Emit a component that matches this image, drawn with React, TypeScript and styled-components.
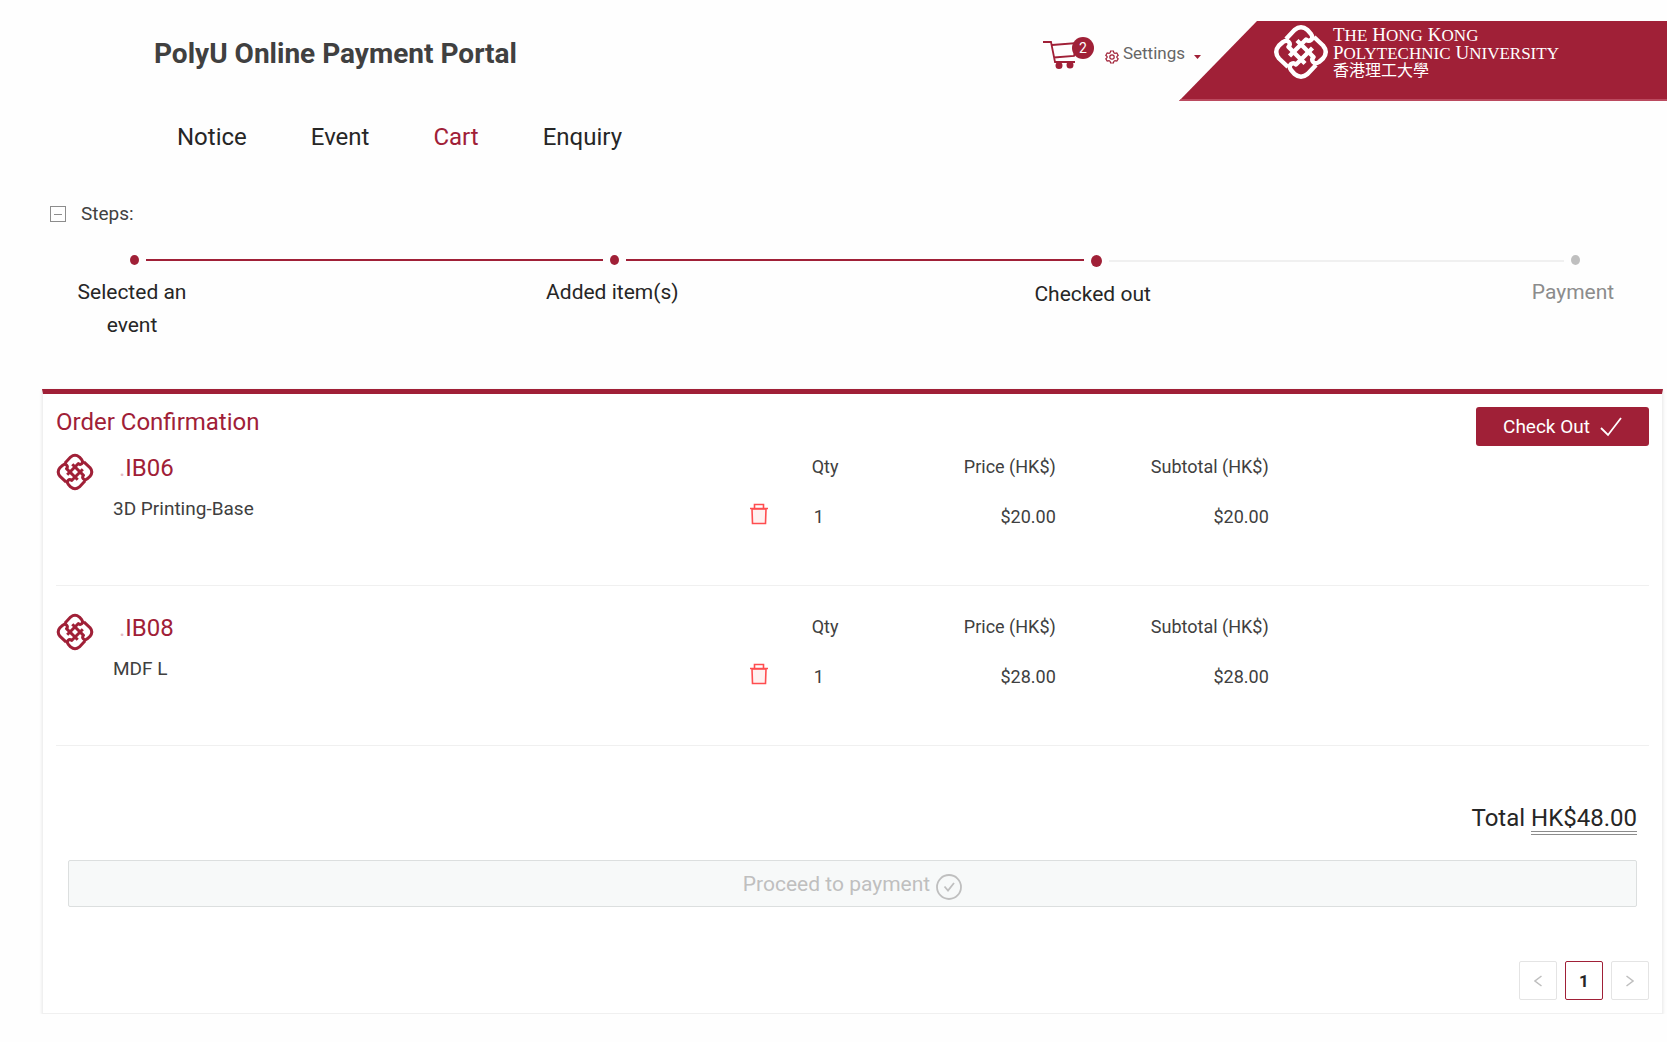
import React from "react";
import styled, { createGlobalStyle } from "styled-components";

const color = {
  brand: "#a02037",
  text: "#404040",
  strong: "#262626",
  muted: "#8c8c8c",
  disabled: "#bfbfbf",
  danger: "#ff4d4f",
  line: "#f0f0f0",
};

const GlobalStyle = createGlobalStyle`
  *, *::before, *::after { box-sizing: border-box; }
  body {
    margin: 0;
    background: #fefefe;
    color: ${color.text};
    font-family: Roboto, "Noto Sans CJK TC", sans-serif;
    font-size: 19px;
    line-height: 30px;
  }
  button { font: inherit; color: inherit; cursor: pointer; }
  h1, h2, h3, p, ol, ul { margin: 0; padding: 0; font-weight: 400; }
  ol, ul { list-style: none; }
  a { color: inherit; text-decoration: none; }
  svg { display: block; flex: none; }
`;

const Page = styled.div`
  padding-top: 21px;
`;

const Header = styled.header`
  display: flex;
  height: 80px;
  padding-left: 154px;
`;

const Title = styled.h1`
  flex: 1;
  padding-top: 17px;
  font-size: 28px;
  line-height: 32px;
  font-weight: 700;
  color: ${color.text};
`;

const Tools = styled.div`
  display: flex;
  align-items: flex-start;
  padding-top: 14px;
`;

const CartButton = styled.button`
  position: relative;
  width: 52px;
  height: 36px;
  margin-right: 10px;
  padding: 4px 0 0;
  border: 0;
  background: none;
  color: ${color.brand};
`;

const Badge = styled.span`
  position: absolute;
  top: 2px;
  right: 1px;
  width: 22px;
  height: 22px;
  border-radius: 11px;
  background: ${color.brand};
  color: #fff;
  font-size: 14px;
  line-height: 22px;
  text-align: center;
`;

const SettingsButton = styled.button`
  display: flex;
  align-items: center;
  gap: 4px;
  height: 36px;
  margin-right: -22px;
  padding: 0;
  border: 0;
  background: none;
  color: #666;
  font-size: 17px;

  svg { color: ${color.brand}; margin-top: 7px; }
  svg:last-child { margin-left: 5px; }
`;

const Banner = styled.a`
  display: flex;
  gap: 4px;
  width: 488px;
  height: 80px;
  padding: 3px 0 0 94px;
  border-bottom: 2px solid #bb4a5f;
  background: ${color.brand};
  color: #fff;
  clip-path: polygon(78px 0, 100% 0, 100% 100%, 0 100%);
`;

const BannerText = styled.span`
  display: flex;
  flex-direction: column;
  padding-top: 2px;
  font-family: "Liberation Serif", "Noto Sans CJK TC", serif;
  line-height: 18px;
  white-space: nowrap;
`;

const English = styled.span`
  display: flex;
  align-items: baseline;
  gap: 5px;
  height: 18px;
  font-size: 17px;
  text-transform: uppercase;
`;

const Word = styled.span`
  display: inline-block;

  &::first-letter { font-size: 19px; }
`;

const Chinese = styled.span`
  font-size: 16px;
`;

const Nav = styled.nav`
  display: flex;
  gap: 64px;
  padding: 20px 0 0 177px;
  font-size: 24px;
  line-height: 32px;
  color: ${color.strong};
`;

const NavLink = styled.a<{ $active?: boolean }>`
  color: ${(p) => (p.$active ? color.brand : "inherit")};
`;

const StepsToggle = styled.button`
  display: flex;
  align-items: center;
  gap: 15px;
  margin: 46px 0 0 50px;
  padding: 0;
  border: 0;
  background: none;
`;

const ToggleIcon = styled.span`
  display: grid;
  place-items: center;
  width: 16px;
  height: 16px;
  border: 1px solid ${color.muted};

  &::after {
    content: "";
    width: 8px;
    height: 1px;
    background: ${color.muted};
  }
`;

const Steps = styled.ol`
  display: flex;
  min-height: 134px;
  margin: 26px 23px 0 61px;
`;

const Step = styled.li<{ $state: "done" | "current" | "waiting" }>`
  flex: 1;
  font-size: 21px;
  line-height: 33px;
  color: ${(p) => (p.$state === "waiting" ? color.muted : color.strong)};

  &:last-child { flex: none; }
`;

const Rail = styled.div`
  display: flex;
  align-items: center;
  gap: 7px;
  width: 100%;
  padding-left: 69px;
`;

const Dot = styled.span<{ $state: "done" | "current" | "waiting" }>`
  flex: none;
  width: ${(p) => (p.$state === "current" ? 11 : 9)}px;
  height: ${(p) => (p.$state === "current" ? 12 : 10)}px;
  border-radius: 50%;
  background: ${(p) => (p.$state === "waiting" ? color.disabled : color.brand)};
`;

const Tail = styled.span<{ $done: boolean }>`
  flex: 1;
  height: 2px;
  margin-right: -62px;
  background: ${(p) => (p.$done ? color.brand : color.line)};
`;

const StepLabel = styled.div`
  width: 142px;
  padding-top: 11px;
  text-align: center;
`;

const Card = styled.main`
  margin: 0 4px 0 42px;
  padding: 0 13px 13px;
  border: 1px solid ${color.line};
  border-top: 5px solid ${color.brand};
  background: #fff;
  box-shadow: 0 1px 3px rgba(0, 0, 0, 0.1);
`;

const CardHead = styled.div`
  display: flex;
  justify-content: space-between;
  align-items: flex-start;
  height: 32px;
  padding-top: 13px;
`;

const CardTitle = styled.h2`
  font-size: 24px;
  line-height: 30px;
  color: ${color.brand};
`;

const CheckOut = styled.button`
  display: flex;
  flex: none;
  justify-content: center;
  align-items: center;
  gap: 10px;
  width: 173px;
  height: 39px;
  border: 0;
  border-radius: 3px;
  background: ${color.brand};
  color: #fff;
`;

const Item = styled.li`
  display: grid;
  grid-template-columns: 57px 636fr 519fr 380fr;
  height: 160px;
  padding-top: 26px;
  border-bottom: 1px solid ${color.line};
  color: ${color.text};
`;

const BrandMark = styled.div`
  padding-top: 1px;
  color: ${color.brand};
`;

const ItemCode = styled.h3`
  padding: 0 0 0 6px;
  font-size: 24px;
  line-height: 32px;
  color: ${color.brand};
`;

const Faint = styled.span`
  opacity: 0.3;
`;

const ItemName = styled.p`
  padding-top: 10px;
`;

const Amounts = styled.table`
  width: 100%;
  height: 100px;
  table-layout: fixed;
  border-collapse: collapse;
  font-size: 18px;
  line-height: 30px;

  th, td { padding: 0; font-weight: 400; text-align: right; vertical-align: top; }
  th:nth-child(-n + 2), td:nth-child(-n + 2) { text-align: left; }
  tr { height: 50px; }
  td:nth-child(2) { padding-left: 2px; }
`;

const Column = styled.col<{ $share: number }>`
  width: ${(p) => p.$share}%;
`;

const DeleteButton = styled.button`
  padding: 1px 0 0;
  border: 0;
  background: none;
  color: ${color.danger};
`;

const Summary = styled.div`
  padding: 57px 12px 0;
`;

const Total = styled.p`
  font-size: 24px;
  line-height: 30px;
  text-align: right;
  color: ${color.strong};
`;

const TotalAmount = styled.span`
  display: inline-block;
  line-height: 25px;
  border-bottom: 4px double ${color.muted};
`;

const Proceed = styled.button`
  display: flex;
  justify-content: center;
  align-items: center;
  gap: 6px;
  width: 100%;
  height: 47px;
  margin-top: 25px;
  border: 1px solid #dcdfdf;
  border-radius: 2px;
  background: #f7f9f9;
  color: ${color.disabled};
  font-size: 21px;

  svg { margin-top: 6px; }
`;

const Pagination = styled.nav`
  display: flex;
  justify-content: flex-end;
  gap: 8px;
  padding-top: 54px;
`;

const PageButton = styled.button<{ $active?: boolean }>`
  display: grid;
  place-items: center;
  width: 38px;
  height: 39px;
  padding: 0;
  border: 1px solid ${(p) => (p.$active ? color.brand : "#e4e4e4")};
  border-radius: 2px;
  background: #fff;
  color: ${(p) => (p.$active ? color.strong : color.disabled)};
  font-size: 17px;
  font-weight: 700;
`;

function Emblem({ size }: { size: number }) {
  return (
    <svg width={size} height={size} viewBox="0 0 56 56" fill="none" stroke="currentColor" strokeWidth="4.4" strokeLinejoin="round" aria-hidden="true">
      {[0, 90, 180, 270].map((angle) => (
        <path
          key={angle}
          transform={`rotate(${angle} 28 28)`}
          d="M13 15 L21.500 6 Q28 .5 34.500 6 L38 10 C41.500 15 36.500 18.500 33 15.500 L16.500 32"
        />
      ))}
    </svg>
  );
}

function CartIcon() {
  return (
    <svg width="42" height="30" viewBox="0 0 42 30" fill="none" stroke="currentColor" strokeWidth="1.800" aria-hidden="true">
      <path d="M0 2 H8 L12 22 H32 M9 5 L34 3 L31 16 L11 17.500" />
      <circle cx="16" cy="25.500" r="2.600" fill="currentColor" />
      <circle cx="27" cy="25" r="2.600" fill="currentColor" />
    </svg>
  );
}

function GearIcon() {
  return (
    <svg width="14" height="14" viewBox="0 0 14 14" fill="none" stroke="currentColor" strokeWidth="1.200" aria-hidden="true">
      <path d="M5.600 1 H8.400 L8.900 2.800 L10 3.400 L11.800 2.900 L13.200 5.300 L11.900 6.500 V7.600 L13.200 8.800 L11.800 11.100 L10 10.700 L8.900 11.300 L8.400 13 H5.600 L5.100 11.300 L4 10.700 L2.200 11.100 L.8 8.800 L2.100 7.600 V6.500 L.8 5.300 L2.200 2.900 L4 3.400 L5.100 2.800 Z" />
      <circle cx="7" cy="7" r="2.200" />
    </svg>
  );
}

function TrashIcon() {
  return (
    <svg width="20" height="22" viewBox="0 0 20 22" fill="none" stroke="currentColor" strokeWidth="1.600" aria-hidden="true">
      <path d="M3 6 H17 L16.500 20.500 H3.500 Z" fill="#fff1f0" />
      <path d="M1 5.500 H19 M5.500 5 V1.500 H14.500 V5" />
    </svg>
  );
}

const steps = [
  { label: "Selected an event", state: "done" },
  { label: "Added item(s)", state: "done" },
  { label: "Checked out", state: "current" },
  { label: "Payment", state: "waiting" },
] as const;

const items = [
  { code: "IB06", name: "3D Printing-Base", qty: 1, price: "$20.00", subtotal: "$20.00" },
  { code: "IB08", name: "MDF L", qty: 1, price: "$28.00", subtotal: "$28.00" },
];

export default function App() {
  return (
    <Page>
      <GlobalStyle />
      <Header>
        <Title>PolyU Online Payment Portal</Title>
        <Tools>
          <CartButton aria-label="Cart, 2 items">
            <CartIcon />
            <Badge>2</Badge>
          </CartButton>
          <SettingsButton>
            <GearIcon />
            Settings
            <svg width="7" height="4" viewBox="0 0 7 4" fill="currentColor" aria-hidden="true">
              <path d="M0 0 H7 L3.500 4 Z" />
            </svg>
          </SettingsButton>
        </Tools>
        <Banner href="#home">
          <Emblem size={56} />
          <BannerText>
            <English>
              <Word>The</Word> <Word>Hong</Word> <Word>Kong</Word>
            </English>
            <English>
              <Word>Polytechnic</Word> <Word>University</Word>
            </English>
            <Chinese>香港理工大學</Chinese>
          </BannerText>
        </Banner>
      </Header>

      <Nav>
        <NavLink href="#notice">Notice</NavLink>
        <NavLink href="#event">Event</NavLink>
        <NavLink href="#cart" $active>Cart</NavLink>
        <NavLink href="#enquiry">Enquiry</NavLink>
      </Nav>

      <StepsToggle aria-expanded="true">
        <ToggleIcon />
        Steps:
      </StepsToggle>
      <Steps>
        {steps.map((step, i) => (
          <Step key={step.label} $state={step.state}>
            <Rail>
              <Dot $state={step.state} />
              {i < steps.length - 1 && <Tail $done={step.state === "done"} />}
            </Rail>
            <StepLabel>{step.label}</StepLabel>
          </Step>
        ))}
      </Steps>

      <Card>
        <CardHead>
          <CardTitle>Order Confirmation</CardTitle>
          <CheckOut>
            Check Out
            <svg width="22" height="20" viewBox="0 0 22 20" fill="none" stroke="currentColor" strokeWidth="1.800" aria-hidden="true">
              <path d="M1 11 L8 18 L21 1" />
            </svg>
          </CheckOut>
        </CardHead>
        <ul>
          {items.map((item) => (
            <Item key={item.code}>
              <BrandMark>
                <Emblem size={38} />
              </BrandMark>
              <div>
                <ItemCode><Faint>.</Faint>{item.code}</ItemCode>
                <ItemName>{item.name}</ItemName>
              </div>
              <Amounts>
                <colgroup>
                  <Column $share={12} />
                  <Column $share={15} />
                  <Column $share={32} />
                  <Column $share={41} />
                </colgroup>
                <thead>
                  <tr>
                    <th aria-label="Remove" />
                    <th>Qty</th>
                    <th>Price (HK$)</th>
                    <th>Subtotal (HK$)</th>
                  </tr>
                </thead>
                <tbody>
                  <tr>
                    <td>
                      <DeleteButton aria-label={`Remove ${item.name}`}>
                        <TrashIcon />
                      </DeleteButton>
                    </td>
                    <td>{item.qty}</td>
                    <td>{item.price}</td>
                    <td>{item.subtotal}</td>
                  </tr>
                </tbody>
              </Amounts>
            </Item>
          ))}
        </ul>
        <Summary>
          <Total>
            Total <TotalAmount>HK$48.00</TotalAmount>
          </Total>
          <Proceed disabled>
            Proceed to payment
            <svg width="26" height="26" viewBox="0 0 26 26" fill="none" stroke="currentColor" strokeWidth="1.800" aria-hidden="true">
              <circle cx="13" cy="13" r="12" />
              <path d="M8.500 12.500 L12 16.500 L18 9" />
            </svg>
          </Proceed>
        </Summary>
        <Pagination aria-label="Pages">
          <PageButton disabled aria-label="Previous page">
            <svg width="8" height="12" viewBox="0 0 8 12" fill="none" stroke="currentColor" strokeWidth="1.500"><path d="M7.500 1 L1 6 L7.500 11" /></svg>
          </PageButton>
          <PageButton $active>1</PageButton>
          <PageButton disabled aria-label="Next page">
            <svg width="8" height="12" viewBox="0 0 8 12" fill="none" stroke="currentColor" strokeWidth="1.500"><path d="M.5 1 L7 6 L.5 11" /></svg>
          </PageButton>
        </Pagination>
      </Card>
    </Page>
  );
}
